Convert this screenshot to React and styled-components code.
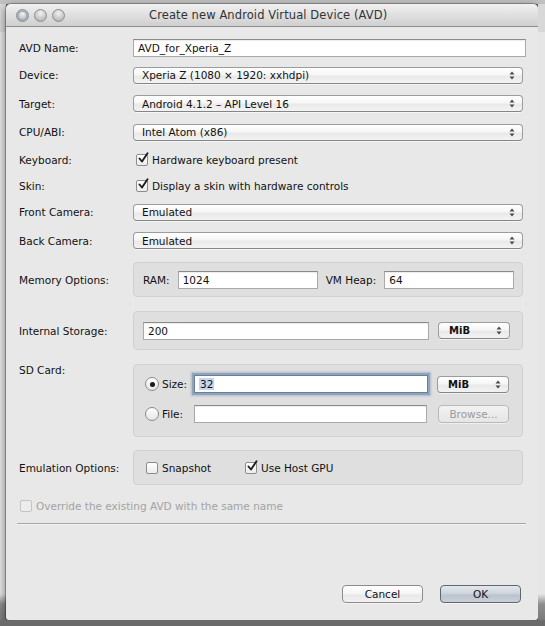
import React from 'react'
import styled, { createGlobalStyle } from 'styled-components'

const GlobalStyle = createGlobalStyle`
  html, body {
    margin: 0;
    padding: 0;
    background: #6f6f6f;
  }
  body {
    width: 545px;
    height: 626px;
    overflow: hidden;
    font-family: "DejaVu Sans", "Liberation Sans", sans-serif;
  }
`

const Desktop = styled.div`
  display: flex;
  flex-direction: column;
  width: 545px;
  height: 626px;
`

const TopStrip = styled.div`
  height: 4px;
  display: flex;
  background: #c2c2c2;
`

const Middle = styled.div`
  display: flex;
  height: 616px;
`

const Sliver = styled.div`
  width: ${p => p.$w}px;
  flex: none;
  background: linear-gradient(180deg, #d8d8d8 0px, #d8d8d8 28px, #e6e6e6 28px, #e6e6e6 590px, #8e8e8e 600px, #7a7a7a 616px);
`

const Window = styled.div`
  width: 532px;
  flex: none;
  display: flex;
  flex-direction: column;
  background: #e8e8e8;
  border-radius: 5px 5px 3px 3px;
  box-shadow: 0 3px 10px rgba(0, 0, 0, 0.55), 0 0 0 1px rgba(0, 0, 0, 0.25);
  overflow: hidden;
`

const TitleBar = styled.div`
  height: 22px;
  flex: none;
  display: flex;
  align-items: center;
  background: linear-gradient(180deg, #f1f1f1 0%, #dedede 55%, #cfcfcf 100%);
  border-bottom: 1px solid #8e8e8e;
`

const Lights = styled.div`
  display: flex;
  gap: 5px;
  padding-left: 10px;
  width: 115px;
`

const Light = styled.span`
  width: 11px;
  height: 11px;
  border-radius: 50%;
  background: radial-gradient(circle at 50% 30%, #f2f2f2 0%, #c9c9c9 55%, #a9a9a9 100%);
  border: 1px solid #8c8c8c;
  box-shadow: ${p => (p.$first ? 'inset 0 0 0 2px #9fb0c2' : 'none')};
`

const Title = styled.div`
  font-size: 11.5px;
  color: #333;
  letter-spacing: 0.1px;
  padding-left: 18px;
`

const Body = styled.div`
  flex: 1;
  display: flex;
  flex-direction: column;
  padding: 7px 12px 17px 13px;
  font-size: 10.5px;
  color: #111;
`

const Row = styled.div`
  display: flex;
  align-items: ${p => (p.$top ? 'flex-start' : 'center')};
  height: ${p => p.$h}px;
  margin-top: ${p => p.$mt || 0}px;
  flex: none;
`

const Label = styled.div`
  width: 114px;
  flex: none;
  padding-top: ${p => (p.$top ? 0 : 0)}px;
`

const TextInput = styled.div`
  height: 18px;
  box-sizing: border-box;
  flex: ${p => (p.$w ? 'none' : 1)};
  width: ${p => (p.$w ? `${p.$w}px` : 'auto')};
  background: #fff;
  border: 1px solid #a9a9a9;
  border-top-color: #8a8a8a;
  box-shadow: inset 0 1px 1px rgba(0, 0, 0, 0.08);
  display: flex;
  align-items: center;
  padding-left: 4px;
  margin-right: ${p => p.$mr || 0}px;
  ${p => p.$focus && `
    box-shadow: 0 0 0 2px #8ea3bd, 0 0 2px 3px rgba(120, 140, 170, 0.45);
    border-color: #6d7f96;
  `}
`

const Selected = styled.span`
  background: #c3d6ee;
  padding: 0 1px;
`

const PopUp = styled.div`
  height: 17px;
  box-sizing: border-box;
  flex: ${p => (p.$w ? 'none' : 1)};
  width: ${p => (p.$w ? `${p.$w}px` : 'auto')};
  margin-right: ${p => p.$mr || 0}px;
  display: flex;
  align-items: center;
  justify-content: space-between;
  padding: 0 7px 0 ${p => (p.$bold ? 10 : 8)}px;
  background: linear-gradient(180deg, #ffffff 0%, #f6f6f6 45%, #e9e9e9 55%, #f3f3f3 100%);
  border: 1px solid #9c9c9c;
  border-bottom-color: #858585;
  border-radius: 4px;
  box-shadow: 0 1px 0 rgba(255, 255, 255, 0.6);
  font-weight: ${p => (p.$bold ? 'bold' : 'normal')};
  font-size: ${p => (p.$bold ? '10px' : '10.5px')};
`

const Arrows = () => (
  <svg width="6" height="9" viewBox="0 0 6 9">
    <path d="M3 0.5 L5.5 3.5 L0.5 3.5 Z" fill="#4a4a4a" />
    <path d="M3 8.5 L5.5 5.5 L0.5 5.5 Z" fill="#4a4a4a" />
  </svg>
)

const CheckBox = styled.span`
  width: 12px;
  height: 12px;
  box-sizing: border-box;
  flex: none;
  border: 1px solid ${p => (p.$disabled ? '#c4c4c4' : '#8d8d8d')};
  border-radius: 2px;
  background: ${p => (p.$disabled ? '#ececec' : 'linear-gradient(180deg, #ffffff, #ececec)')};
  display: flex;
  align-items: center;
  justify-content: center;
  margin-right: 4px;
  margin-left: ${p => p.$ml || 0}px;
`

const Tick = () => (
  <svg width="12" height="12" viewBox="0 0 12 12" style={{ marginTop: -3, marginRight: -2 }}>
    <path d="M2.5 6.5 L5 9.5 L10.5 1.2" fill="none" stroke="#1e1e1e" strokeWidth="1.9" strokeLinecap="round" strokeLinejoin="round" />
  </svg>
)

const Check = styled.div`
  display: flex;
  align-items: center;
  width: ${p => (p.$w ? `${p.$w}px` : 'auto')};
  color: ${p => (p.$disabled ? '#a3a3a3' : 'inherit')};
`

const Group = styled.div`
  flex: 1;
  align-self: stretch;
  margin-right: 3px;
  box-sizing: border-box;
  background: #dfdfdf;
  border: 1px solid #d1d1d1;
  border-radius: 4px;
  display: flex;
  flex-direction: ${p => (p.$col ? 'column' : 'row')};
  align-items: ${p => (p.$col ? 'stretch' : 'center')};
  padding: ${p => p.$pad};
`

const GroupLabel = styled.span`
  margin-right: ${p => p.$mr}px;
`

const SubRow = styled.div`
  display: flex;
  align-items: center;
  height: 30px;
`

const Radio = styled.div`
  display: flex;
  align-items: center;
  width: 49px;
  flex: none;
`

const RadioDot = styled.span`
  width: 14px;
  height: 14px;
  box-sizing: border-box;
  border-radius: 50%;
  border: 1px solid #8a8a8a;
  background: linear-gradient(180deg, #ffffff, #e6e6e6);
  display: flex;
  align-items: center;
  justify-content: center;
  margin-right: 3px;
  &::after {
    content: '';
    display: ${p => (p.$on ? 'block' : 'none')};
    width: 5px;
    height: 5px;
    border-radius: 50%;
    background: #1a1a1a;
  }
`

const PushButton = styled.div`
  width: ${p => p.$w}px;
  height: 18px;
  box-sizing: border-box;
  flex: none;
  display: flex;
  align-items: center;
  justify-content: center;
  border-radius: 4px;
  border: 1px solid ${p => (p.$disabled ? '#b9b9b9' : p.$default ? '#5e6670' : '#8c8c8c')};
  color: ${p => (p.$disabled ? '#9a9a9a' : '#111')};
  background: ${p =>
    p.$default
      ? 'linear-gradient(180deg, #e4e8ee 0%, #cdd3db 50%, #bcc3cd 55%, #c9cfd8 100%)'
      : p.$disabled
        ? 'linear-gradient(180deg, #f2f2f2 0%, #e6e6e6 100%)'
        : 'linear-gradient(180deg, #ffffff 0%, #f5f5f5 50%, #e8e8e8 55%, #f2f2f2 100%)'};
  box-shadow: 0 1px 0 rgba(255, 255, 255, 0.5);
`

const Separator = styled.div`
  height: 1px;
  margin: 6px 0 0 -2px;
  background: #a6a6a6;
  border-bottom: 1px solid #f4f4f4;
  flex: none;
`

const Footer = styled.div`
  margin-top: auto;
  display: flex;
  justify-content: flex-end;
  gap: 17px;
  padding-right: 5px;
`

const Bottom = styled.div`
  height: 6px;
  background: #6a6a6a;
`

const rows = [
  { label: 'Device:', value: 'Xperia Z (1080 × 1920: xxhdpi)', h: 28 },
  { label: 'Target:', value: 'Android 4.1.2 – API Level 16', h: 29 },
  { label: 'CPU/ABI:', value: 'Intel Atom (x86)', h: 28 },
]

const App = () => {
  return (
    <Desktop>
      <GlobalStyle />
      <TopStrip />
      <Middle>
        <Sliver $w={6} />
        <Window>
          <TitleBar>
            <Lights>
              <Light $first />
              <Light />
              <Light />
            </Lights>
            <Title>Create new Android Virtual Device (AVD)</Title>
          </TitleBar>
          <Body>
            <Row $h={27}>
              <Label>AVD Name:</Label>
              <TextInput>AVD_for_Xperia_Z</TextInput>
            </Row>
            {rows.map(r => (
              <Row $h={r.h} key={r.label}>
                <Label>{r.label}</Label>
                <PopUp $mr={3}>
                  <span>{r.value}</span>
                  <Arrows />
                </PopUp>
              </Row>
            ))}
            <Row $h={27}>
              <Label>Keyboard:</Label>
              <Check>
                <CheckBox $ml={3}><Tick /></CheckBox>
                Hardware keyboard present
              </Check>
            </Row>
            <Row $h={25}>
              <Label>Skin:</Label>
              <Check>
                <CheckBox $ml={3}><Tick /></CheckBox>
                Display a skin with hardware controls
              </Check>
            </Row>
            <Row $h={28}>
              <Label>Front Camera:</Label>
              <PopUp $mr={3}>
                <span>Emulated</span>
                <Arrows />
              </PopUp>
            </Row>
            <Row $h={29}>
              <Label>Back Camera:</Label>
              <PopUp $mr={3}>
                <span>Emulated</span>
                <Arrows />
              </PopUp>
            </Row>

            <Row $h={35} $mt={7}>
              <Label>Memory Options:</Label>
              <Group $pad="0 8px 0 9px">
                <GroupLabel $mr={8}>RAM:</GroupLabel>
                <TextInput $w={140}>1024</TextInput>
                <GroupLabel $mr={8} style={{ marginLeft: 8 }}>VM Heap:</GroupLabel>
                <TextInput>64</TextInput>
              </Group>
            </Row>

            <Row $h={39} $mt={14}>
              <Label>Internal Storage:</Label>
              <Group $pad="0 12px 0 9px">
                <TextInput $mr={9}>200</TextInput>
                <PopUp $w={72} $bold>
                  <span>MiB</span>
                  <Arrows />
                </PopUp>
              </Group>
            </Row>

            <Row $h={73} $mt={14} $top>
              <Label $top>SD Card:</Label>
              <Group $col $pad="4px 13px 0 11px">
                <SubRow>
                  <Radio>
                    <RadioDot $on />
                    Size:
                  </Radio>
                  <TextInput $focus $mr={9}><Selected>32</Selected></TextInput>
                  <PopUp $w={72} $bold>
                    <span>MiB</span>
                    <Arrows />
                  </PopUp>
                </SubRow>
                <SubRow>
                  <Radio>
                    <RadioDot />
                    File:
                  </Radio>
                  <TextInput $mr={11} />
                  <PushButton $w={71} $disabled>Browse...</PushButton>
                </SubRow>
              </Group>
            </Row>

            <Row $h={35} $mt={13}>
              <Label>Emulation Options:</Label>
              <Group $pad="0 8px 0 12px">
                <Check $w={99}>
                  <CheckBox />
                  Snapshot
                </Check>
                <Check>
                  <CheckBox><Tick /></CheckBox>
                  Use Host GPU
                </Check>
              </Group>
            </Row>

            <Row $h={22} $mt={10}>
              <Check $disabled>
                <CheckBox $disabled $ml={1} />
                Override the existing AVD with the same name
              </Check>
            </Row>
            <Separator />

            <Footer>
              <PushButton $w={81}>Cancel</PushButton>
              <PushButton $w={81} $default>OK</PushButton>
            </Footer>
          </Body>
        </Window>
        <Sliver $w={7} />
      </Middle>
      <Bottom />
    </Desktop>
  )
}

export default App
